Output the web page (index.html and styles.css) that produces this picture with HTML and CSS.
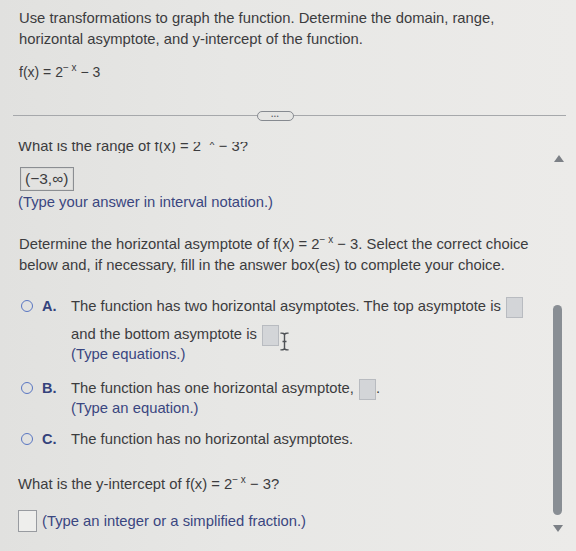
FILE: index.html
```html
<!DOCTYPE html>
<html>
<head>
<meta charset="utf-8">
<link rel="stylesheet" href="styles.css">
</head>
<body>
<div class="page">
  <div class="intro">
    <p class="line">Use transformations to graph the function. Determine the domain, range,</p>
    <p class="line">horizontal asymptote, and y-intercept of the function.</p>
  </div>
  <p class="func">f(x) = 2<sup>− x</sup> − 3</p>

  <div class="sep">
    <span class="rule rule-l"></span>
    <span class="pill">•••</span>
    <span class="rule rule-r"></span>
  </div>

  <div class="range-q"><span class="clip">What is the range of f(x) = 2<sup>− x</sup> − 3?</span></div>

  <div class="answer">(−3,∞)</div>
  <p class="note answer-note">(Type your answer in interval notation.)</p>

  <div class="asym">
    <p class="line">Determine the horizontal asymptote of f(x) = 2<sup>− x</sup> − 3. Select the correct choice</p>
    <p class="line">below and, if necessary, fill in the answer box(es) to complete your choice.</p>
  </div>

  <div class="opt opt-a">
    <span class="radio"></span><span class="lbl">A.</span>
    <div class="opt-body">
      <p class="oline first">The function has two horizontal asymptotes. The top asymptote is <span class="box"></span></p>
      <p class="oline">and the bottom asymptote is <span class="box"></span><svg class="ibeam" width="11" height="19" viewBox="0 0 11 19"><path d="M1.5 1.2 Q5.5 0.8 5.5 3.2 Q5.5 0.8 9.5 1.2 M5.5 3.2 V15.8 M1.5 17.8 Q5.5 18.2 5.5 15.8 Q5.5 18.2 9.5 17.8 M3.5 9.5 H7.5" fill="none" stroke="#4f5256" stroke-width="1.4"/></svg></p>
      <p class="oline note">(Type equations.)</p>
    </div>
  </div>

  <div class="opt opt-b">
    <span class="radio"></span><span class="lbl">B.</span>
    <div class="opt-body">
      <p class="oline">The function has one horizontal asymptote, <span class="box"></span>.</p>
      <p class="oline note">(Type an equation.)</p>
    </div>
  </div>

  <div class="opt opt-c">
    <span class="radio"></span><span class="lbl">C.</span>
    <div class="opt-body">
      <p class="oline">The function has no horizontal asymptotes.</p>
    </div>
  </div>

  <p class="yq">What is the y-intercept of f(x) = 2<sup>− x</sup> − 3?</p>
  <div class="yrow"><span class="ybox"></span><span class="note">(Type an integer or a simplified fraction.)</span></div>
</div>

<div class="up"></div>
<div class="thumb"></div>
<div class="down"></div>
</body>
</html>
```

FILE: styles.css
```css
html, body {
  margin: 0;
  padding: 0;
}
body {
  width: 576px;
  height: 551px;
  overflow: hidden;
  position: relative;
  background: linear-gradient(90deg, #e1e1df 0%, #e7e7e5 40%, #ecebe9 100%);
  font-family: "Liberation Sans", Arial, sans-serif;
  font-size: 14.8px;
  color: #3c3c3e;
}
p { margin: 0; }
.page {
  padding: 8px 10px 0 19px;
}
.line {
  line-height: 20.5px;
  white-space: nowrap;
}
sup {
  font-size: 10px;
  vertical-align: 6px;
  line-height: 0;
}
.func {
  margin-top: 13px;
  font-size: 14px;
  line-height: 20px;
}
.sep {
  display: flex;
  align-items: center;
  margin: 28px 0 0 -6px;
  height: 11px;
}
.rule {
  height: 1px;
  background: #a6a8ab;
  flex-basis: 0;
}
.rule-l { flex-grow: 244; }
.rule-r { flex-grow: 272; }
.pill {
  width: 35px;
  height: 8px;
  border: 1px solid #868a90;
  border-radius: 5px;
  font-size: 5px;
  line-height: 8px;
  text-align: center;
  color: #555a60;
  letter-spacing: 1px;
  background: #e5e5e3;
}
.range-q {
  margin-top: 21px;
  height: 11px;
  overflow: hidden;
  line-height: 20px;
  white-space: nowrap;
  margin-left: -1px;
}
.clip {
  display: block;
  margin-top: -6px;
}
.answer {
  margin: 14px 0 0 1px;
  display: inline-block;
  border: 1px solid #8b8e92;
  box-shadow: inset 0 0 0 1px #d9d9d7;
  padding: 0 5px 0 4px;
  height: 22px;
  line-height: 22px;
  font-size: 15.5px;
}
.note {
  color: #3a4680;
}
p.note {
  line-height: 20px;
}
.answer-note {
  margin-top: 1px;
  margin-left: -1px;
}
.asym {
  margin-top: 22px;
}
.opt {
  display: flex;
  align-items: flex-start;
  margin-left: 2px;
}
.opt-a { margin-top: 21px; }
.opt-b { margin-top: 14px; }
.opt-c { margin-top: 11px; }
.radio {
  width: 10px;
  height: 10px;
  border: 1.5px solid #5976c2;
  border-radius: 50%;
  margin-top: 3.5px;
  flex: none;
}
.lbl {
  margin-left: 9px;
  width: 29px;
  font-weight: bold;
  color: #34427c;
  line-height: 20px;
  flex: none;
  font-size: 14.5px;
}
.oline {
  line-height: 20px;
  height: 20px;
  white-space: nowrap;
}
.oline.first { margin-bottom: 8px; }
.box {
  display: inline-block;
  box-sizing: border-box;
  width: 17px;
  height: 21px;
  background: #d3d5d8;
  border: 1px solid #b8bbc0;
  vertical-align: middle;
  margin: -5px 0 -5px 1px;
}
.ibeam {
  display: inline-block;
  vertical-align: middle;
  margin: -8px 0 -8px 0;
  position: relative;
  top: 6px;
}
.yq {
  margin-top: 25px;
  margin-left: -1px;
  line-height: 20px;
}
.yrow {
  margin-top: 16px;
  margin-left: -1px;
  display: flex;
  align-items: center;
  gap: 5px;
}
.ybox {
  box-sizing: border-box;
  width: 19px;
  height: 22px;
  border: 1px solid #989ba0;
  background: #eeeeec;
}
.up {
  position: absolute;
  left: 554px;
  top: 155px;
  width: 0;
  height: 0;
  border-left: 5px solid transparent;
  border-right: 5px solid transparent;
  border-bottom: 7px solid #7c8086;
}
.thumb {
  position: absolute;
  left: 553px;
  top: 305px;
  width: 9px;
  height: 210px;
  background: #898e94;
  border-radius: 5px;
}
.down {
  position: absolute;
  left: 553px;
  top: 525px;
  width: 0;
  height: 0;
  border-left: 5px solid transparent;
  border-right: 5px solid transparent;
  border-top: 7px solid #7c8086;
}
```
